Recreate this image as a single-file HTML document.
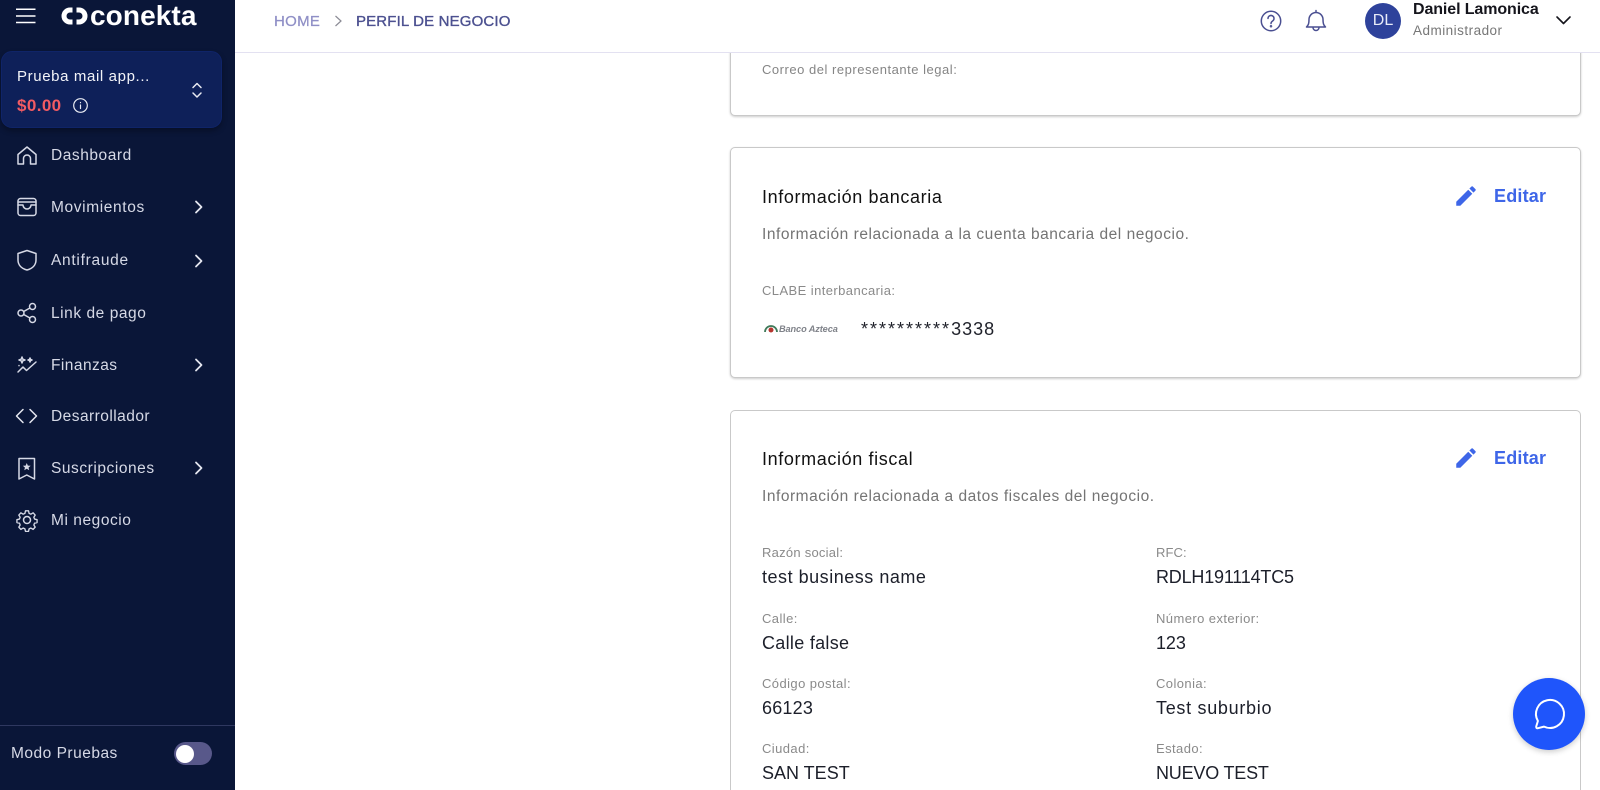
<!DOCTYPE html>
<html lang="es"><head><meta charset="utf-8"><title>Perfil de negocio</title>
<style>
*{box-sizing:border-box}
html,body{margin:0;padding:0;width:1600px;height:790px;overflow:hidden;background:#fff;font-family:"Liberation Sans",sans-serif}
#root{position:relative;width:1600px;height:790px;overflow:hidden;background:#fff}
.t{position:absolute;white-space:nowrap;line-height:20px}
#side{position:absolute;left:0;top:0;width:235px;height:790px;background:#0a1638}
.m{color:#d6d9e6;font-size:15.5px;left:51px;letter-spacing:.55px}
svg{position:absolute;overflow:visible;fill:none}
.i{stroke:#d6d9e6;stroke-width:1.5;stroke-linecap:round;stroke-linejoin:round;width:24px;height:24px;left:15px}
.ch{stroke:#e4e6ef;stroke-width:1.8;stroke-linecap:round;stroke-linejoin:round;width:10px;height:14px;left:193.5px}
.card{position:absolute;left:730px;width:851px;background:#fff;border:1px solid #c9c9c9;border-radius:5px;box-shadow:0 1px 2px rgba(0,0,0,.2)}
.h{font-size:18px;color:#111;left:762px;letter-spacing:.62px}
.d{font-size:15.5px;color:#747474;left:762px;letter-spacing:.53px}
.l{font-size:13px;color:#8a8a8a;letter-spacing:.42px}
.v{font-size:18px;color:#1c1f2a;letter-spacing:.52px}
.e{font-size:18px;font-weight:bold;color:#3e66e8;left:1494px;letter-spacing:.2px}
.p{fill:#3e66e8;width:26px;height:26px;left:1452.5px}
</style></head><body>
<div id="root">

<div class="card" style="top:20px;height:96px"></div>
<div class="card" style="top:147px;height:231px"></div>
<div class="card" style="top:410px;height:380px;border-bottom:0;border-radius:5px 5px 0 0;box-shadow:none"></div>

<div id="hdr" style="position:absolute;left:235px;top:0;width:1365px;height:53px;background:#fff;border-bottom:1.5px solid #e3e1f1"></div>
<div class="t" style="left:274px;top:12px;font-size:15px;color:#8f8fc6;letter-spacing:.3px;-webkit-text-stroke:.25px #8f8fc6">HOME</div>
<svg style="left:334px;top:15px;width:9px;height:12px;stroke:#8b8b95;stroke-width:1.2"><path d="M1.5 1l5.500 5-5.500 5"/></svg>
<div class="t" style="left:356px;top:12px;font-size:15px;color:#4c5190;letter-spacing:.15px;-webkit-text-stroke:.35px #4c5190">PERFIL DE NEGOCIO</div>

<svg style="left:1260px;top:10px;width:22px;height:22px;stroke:#4a4f91;stroke-width:1.5;stroke-linecap:round"><circle cx="11" cy="11" r="9.700"/><path d="M8 8.500a3 3 0 1 1 4.600 2.500c-1 .7-1.600 1.200-1.600 2.500"/><circle cx="11" cy="16.300" r=".5"/></svg>
<svg style="left:1305px;top:9px;width:22px;height:24px;stroke:#4a4f91;stroke-width:1.5;stroke-linecap:round;stroke-linejoin:round"><path d="M1.500 18c2-2 2.500-3.500 2.500-7.500a7 7 0 0 1 14 0c0 4 .5 5.500 2.500 7.500zM8 18.500a3 3 0 0 0 6 0M11 2.500V1.500"/></svg>
<div style="position:absolute;left:1365px;top:3px;width:36px;height:36px;border-radius:50%;background:#2e429b"></div>
<div class="t" style="left:1365px;width:36px;text-align:center;top:11px;font-size:16px;color:#e8ebf8">DL</div>
<div class="t" style="left:1413px;top:0;font-size:16px;font-weight:bold;color:#15151c;letter-spacing:-.1px">Daniel Lamonica</div>
<div class="t" style="left:1413px;top:20.500px;font-size:13.500px;color:#777;letter-spacing:.48px">Administrador</div>
<svg style="left:1556px;top:16px;width:15px;height:9px;stroke:#15151c;stroke-width:1.600;stroke-linecap:round;stroke-linejoin:round"><path d="M1 1l6.500 6.500L14 1"/></svg>

<div class="t" style="left:762px;top:60px;font-size:13px;color:#858585;letter-spacing:.52px">Correo del representante legal:</div>

<div class="t h" style="top:187px">Información bancaria</div>
<div class="t d" style="top:225px">Información relacionada a la cuenta bancaria del negocio.</div>
<svg class="p" style="top:182.500px" viewBox="0 0 24 24"><path d="M3 17.250V21h3.750L17.810 9.940l-3.750-3.750L3 17.250zM20.710 7.040c.39-.39.39-1.020 0-1.410l-2.340-2.340c-.39-.39-1.020-.39-1.410 0l-1.830 1.830 3.750 3.750 1.830-1.830z"/></svg>
<div class="t e" style="top:186px">Editar</div>
<div class="t l" style="left:762px;top:281px">CLABE interbancaria:</div>
<svg style="left:764px;top:323px;width:14px;height:11px"><path d="M1 9a6 6 0 0 1 12 0" stroke="#3f7a5a" stroke-width="1.800"/><circle cx="7" cy="7" r="2.500" fill="#b5352f"/></svg>
<div class="t" style="left:779px;top:319px;font-size:9.200px;font-weight:bold;font-style:italic;color:#7f8289;letter-spacing:-.1px">Banco Azteca</div>
<div class="t" style="left:861px;top:319px;font-size:18px;color:#20222b;letter-spacing:2px">**********<span style="letter-spacing:1px">3338</span></div>

<div class="t h" style="top:449px">Información fiscal</div>
<div class="t d" style="top:487px">Información relacionada a datos fiscales del negocio.</div>
<svg class="p" style="top:444.500px" viewBox="0 0 24 24"><path d="M3 17.250V21h3.750L17.810 9.940l-3.750-3.750L3 17.250zM20.710 7.040c.39-.39.39-1.020 0-1.410l-2.340-2.340c-.39-.39-1.020-.39-1.410 0l-1.830 1.830 3.750 3.750 1.830-1.830z"/></svg>
<div class="t e" style="top:448px">Editar</div>

<div class="t l" style="left:762px;top:543px;letter-spacing:.25px">Razón social:</div><div class="t v" style="left:762px;top:567px">test business name</div>
<div class="t l" style="left:1156px;top:543px;letter-spacing:.1px">RFC:</div><div class="t v" style="left:1156px;top:567px;letter-spacing:-.2px">RDLH191114TC5</div>
<div class="t l" style="left:762px;top:609px">Calle:</div><div class="t v" style="left:762px;top:632.500px;letter-spacing:.3px">Calle false</div>
<div class="t l" style="left:1156px;top:609px">Número exterior:</div><div class="t v" style="left:1156px;top:632.500px;letter-spacing:-.1px">123</div>
<div class="t l" style="left:762px;top:674px">Código postal:</div><div class="t v" style="left:762px;top:698px;letter-spacing:.2px">66123</div>
<div class="t l" style="left:1156px;top:674px">Colonia:</div><div class="t v" style="left:1156px;top:698px;letter-spacing:.7px">Test suburbio</div>
<div class="t l" style="left:762px;top:739px">Ciudad:</div><div class="t v" style="left:762px;top:763px;letter-spacing:0">SAN TEST</div>
<div class="t l" style="left:1156px;top:739px">Estado:</div><div class="t v" style="left:1156px;top:763px;letter-spacing:-.2px">NUEVO TEST</div>

<div style="position:absolute;left:1513px;top:678px;width:72px;height:72px;border-radius:50%;background:#1f55fb;box-shadow:0 2px 6px rgba(0,0,0,.2)"></div>
<svg style="left:1533px;top:698px;width:33px;height:33px;stroke:#fff;stroke-width:2;stroke-linejoin:round"><path d="M4.900 23A14 14 0 1 1 11 28.600L5 30.200Q3 30.600 3.200 28.500z"/></svg>

<div id="side">
<svg style="left:16px;top:8px;width:20px;height:16px;stroke:#fff;stroke-width:1.500"><path d="M0 1.200h19.500M0 8h19.500M0 14.500h19.500"/></svg>
<svg style="left:62px;top:7px;width:25px;height:18px;stroke:#fff;stroke-width:5"><path d="M10.500 3H8a6 6 0 0 0 0 12h2.500M14.500 3H17a6 6 0 0 1 0 12h-2.500"/></svg>
<div class="t" style="left:90px;top:5.500px;font-size:28px;font-weight:bold;color:#fff;letter-spacing:.1px">conekta</div>

<div style="position:absolute;left:1px;top:51px;width:221px;height:77px;border-radius:11px;background:#0e2059;border:1px solid #0f2468;box-shadow:0 3px 6px rgba(0,0,0,.3)"></div>
<div class="t" style="left:17px;top:67px;font-size:15px;color:#f2f3f8;letter-spacing:.62px">Prueba mail app...</div>
<div class="t" style="left:17px;top:96px;font-size:17px;font-weight:bold;color:#f25b63;letter-spacing:.4px">$0.00</div>
<svg style="left:73px;top:98px;width:15px;height:15px;stroke:#e8eaf2;stroke-width:1.200;stroke-linecap:round"><circle cx="7.500" cy="7.500" r="6.800"/><path d="M7.500 7v3.500M7.500 4.500v.2"/></svg>
<svg style="left:191px;top:81.500px;width:12px;height:17px;stroke:#e8eaf2;stroke-width:1.500;stroke-linecap:round;stroke-linejoin:round"><path d="M2 5.500L6 1.500l4 4M2 11l4 4 4-4"/></svg>

<svg class="i" style="top:143px" viewBox="0 0 24 24"><path d="M3 11.500L12 4l9 7.500V21h-5.500v-5.500a3.500 3.500 0 0 0-7 0V21H3z"/></svg>
<div class="t m" style="top:146px">Dashboard</div>

<svg class="i" style="top:195px" viewBox="0 0 24 24"><rect x="3" y="3.500" width="18" height="17" rx="2.500"/><path d="M3 7h18M3 10h5a4 4 0 0 0 8 0h5"/></svg>
<div class="t m" style="top:198px;letter-spacing:.62px">Movimientos</div>
<svg class="ch" style="top:200px"><path d="M2 1.500l5.500 5.500L2 12.500"/></svg>

<svg class="i" style="top:248px" viewBox="0 0 24 24"><path d="M12 2.500l9 3v6.500c0 5-3.500 8.500-9 10-5.500-1.500-9-5-9-10V5.500z"/></svg>
<div class="t m" style="top:251px;letter-spacing:.72px">Antifraude</div>
<svg class="ch" style="top:254px"><path d="M2 1.500l5.500 5.500L2 12.500"/></svg>

<svg class="i" style="top:301px" viewBox="0 0 24 24"><circle cx="6" cy="12" r="3"/><circle cx="17.500" cy="5.500" r="3"/><circle cx="17.500" cy="18.500" r="3"/><path d="M8.700 10.500l6.200-3.500M8.700 13.500l6.200 3.500"/></svg>
<div class="t m" style="top:304px">Link de pago</div>

<svg class="i" style="top:353px" viewBox="0 0 24 24"><path d="M3 19l5-5 3.500 3.500L21 9M7 4l.8 2.200L10 7 7.800 7.800 7 10l-.8-2.200L4 7l2.200-.8zM15 5l.6 1.400L17 7l-1.400.6L15 9l-.6-1.400L13 7l1.400-.6zM4 12.500v.1"/></svg>
<div class="t m" style="top:356px;letter-spacing:.45px">Finanzas</div>
<svg class="ch" style="top:358px"><path d="M2 1.500l5.500 5.500L2 12.500"/></svg>

<svg style="left:15px;top:405px;width:23px;height:22px;stroke:#e4e6ef;stroke-width:1.500;stroke-linecap:round;stroke-linejoin:round"><path d="M8 4.500L1.500 11 8 17.500M15 4.500l6.500 6.500-6.500 6.500"/></svg>
<div class="t m" style="top:407px;letter-spacing:.46px">Desarrollador</div>

<svg class="i" style="top:456px" viewBox="0 0 24 24"><path d="M4 2.500h15.500V23l-7.750-4L4 23z"/><path d="M11.750 7l1.100 2.600 2.800.2-2.100 1.800.7 2.700-2.500-1.500-2.500 1.500.7-2.700-2.100-1.800 2.800-.2z" fill="#d6d9e6" stroke="none"/></svg>
<div class="t m" style="top:459px">Suscripciones</div>
<svg class="ch" style="top:461px"><path d="M2 1.500l5.500 5.500L2 12.500"/></svg>

<svg class="i" style="top:508px" viewBox="0 0 24 24"><circle cx="12" cy="12" r="3.500"/><path d="M10.300 2.500h3.400l.6 2.800 2 .9 2.500-1.500 2.300 2.500-1.500 2.400.8 2 2.800.7v3.200l-2.800.7-.8 2 1.500 2.400-2.300 2.500-2.500-1.500-2 .9-.6 2.800h-3.400l-.6-2.800-2-.9-2.500 1.500-2.300-2.500 1.500-2.400-.8-2-2.800-.7v-3.200l2.800-.7.8-2-1.500-2.400 2.300-2.500 2.500 1.500 2-.9z" transform="translate(1.200 .6) scale(.9)"/></svg>
<div class="t m" style="top:511px">Mi negocio</div>

<div style="position:absolute;left:0;top:725px;width:235px;height:1px;background:#2f3860"></div>
<div class="t" style="left:11px;top:744px;font-size:15.500px;color:#d6d9e6;letter-spacing:.5px">Modo Pruebas</div>
<div style="position:absolute;left:174px;top:742px;width:38px;height:23px;border-radius:12px;background:#58588a"></div>
<div style="position:absolute;left:175.500px;top:744.500px;width:18px;height:18px;border-radius:50%;background:#fff"></div>
</div>
</div>
</body></html>
